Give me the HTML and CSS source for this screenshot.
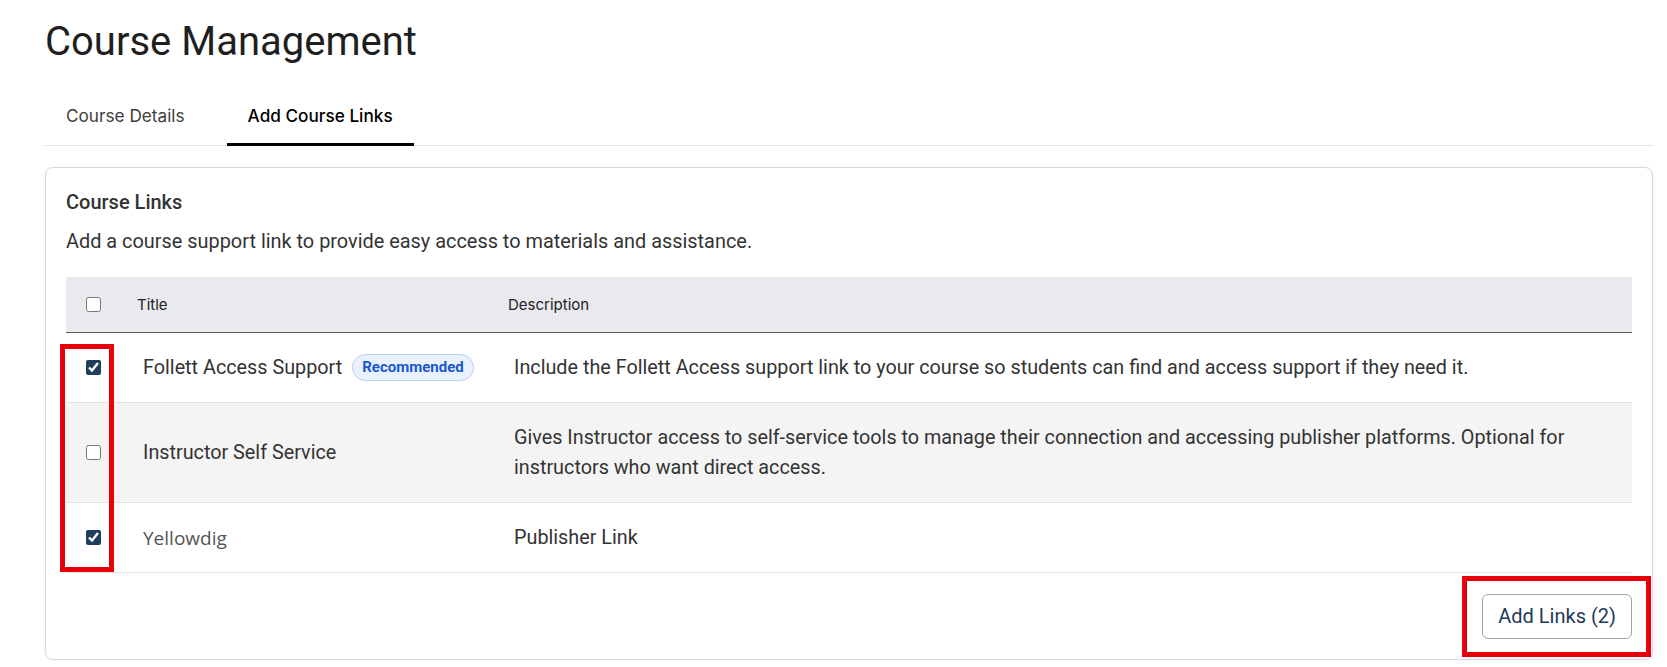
FILE: index.html
```html
<!DOCTYPE html>
<html lang="en">
<head>
    <meta charset="UTF-8">
    <meta name="viewport" content="width=device-width, initial-scale=1.0">
    <title>Course Management</title>
    <link rel="stylesheet" href="styles.css">
</head>
<body>
    <div class="page">
        <h1 class="page-title">Course Management</h1>

        <div class="tabs">
            <div class="tab">Course Details</div>
            <div class="tab active">Add Course Links</div>
        </div>

        <div class="card">
            <h2 class="card-title">Course Links</h2>
            <p class="card-text">Add a course support link to provide easy access to materials and assistance.</p>

            <table class="links-table">
                <thead>
                    <tr>
                        <th class="col-check"><input type="checkbox"></th>
                        <th class="col-title">Title</th>
                        <th>Description</th>
                    </tr>
                </thead>
                <tbody>
                    <tr>
                        <td class="col-check"><input type="checkbox" checked></td>
                        <td class="link-name">Follett Access Support<span class="badge">Recommended</span></td>
                        <td>Include the Follett Access support link to your course so students can find and access support if they need it.</td>
                    </tr>
                    <tr class="alt">
                        <td class="col-check"><input type="checkbox"></td>
                        <td class="link-name">Instructor Self Service</td>
                        <td>Gives Instructor access to self-service tools to manage their connection and accessing publisher platforms. Optional for instructors who want direct access.</td>
                    </tr>
                    <tr>
                        <td class="col-check"><input type="checkbox" checked></td>
                        <td class="link-name publisher-name">Yellowdig</td>
                        <td>Publisher Link</td>
                    </tr>
                </tbody>
            </table>

            <div class="card-footer">
                <button class="btn">Add Links (2)</button>
            </div>

            <div class="mark mark-checks"></div>
            <div class="mark mark-button"></div>
        </div>
    </div>
</body>
</html>
```

FILE: styles.css
```css
* {
    box-sizing: border-box;
}
body {
    margin: 0;
    background: #fff;
    font-family: Roboto, "Liberation Sans", sans-serif;
    color: #333;
}
.page {
    padding: 18px 14px 0 45px;
}
.page-title {
    margin: 0;
    font-size: 40px;
    line-height: 47px;
    font-weight: 400;
    color: #1f1f1f;
}

/* tabs */
.tabs {
    display: flex;
    gap: 21px;
    margin-top: 24px;
    border-bottom: 1px solid #e2e2e2;
}
.tab {
    font-family: Inter, sans-serif;
    font-size: 17.2px;
    line-height: 24px;
    color: #3d3d3d;
    padding: 15px 21px;
    border-bottom: 3px solid transparent;
    margin-bottom: -1px;
}
.tab.active {
    color: #000;
    font-weight: 500;
    border-bottom-color: #000;
}

/* card */
.card {
    position: relative;
    margin-top: 21px;
    border: 1px solid #d8d8d8;
    border-radius: 8px;
    padding: 20px;
    box-shadow: 0 1px 4px rgba(0, 0, 0, 0.08);
}
.card-title {
    margin: 0;
    font-size: 20px;
    line-height: 28px;
    font-weight: 500;
    color: #333;
}
.card-text {
    margin: 11px 0 20px;
    font-size: 19.9px;
    line-height: 30px;
    color: #333;
}

/* table */
.links-table {
    width: 100%;
    table-layout: fixed;
    border-collapse: separate;
    border-spacing: 0;
}
.links-table th {
    background: #e9eaee;
    font-family: Inter, sans-serif;
    font-size: 15px;
    font-weight: 400;
    line-height: 23px;
    color: #222;
    text-align: left;
    padding: 16px;
    border-bottom: 1px solid #5c5c5c;
}
.links-table td {
    font-size: 19.8px;
    line-height: 30px;
    color: #333;
    padding: 19.5px 16px 19.5px 22px;
    border-bottom: 1px solid #e2e2e2;
    vertical-align: middle;
}
.links-table tr.alt td {
    background: #f4f4f4;
}
.links-table .col-check {
    width: 55px;
    padding-left: 20px;
    padding-right: 0;
}
.links-table .col-title {
    width: 371px;
}
.links-table td.link-name {
    white-space: nowrap;
    padding-right: 0;
}
.links-table input {
    display: block;
    width: 15px;
    height: 15px;
    margin: 0;
    accent-color: #203e5c;
}
.links-table td.publisher-name {
    font-family: "Open Sans", sans-serif;
    font-size: 19px;
    color: #555;
}
.badge {
    display: inline-block;
    margin-left: 10px;
    padding: 0 9px;
    border: 1px solid #b9cff2;
    border-radius: 14px;
    background: #e9f1fd;
    color: #1b58d0;
    font-size: 15px;
    font-weight: 700;
    line-height: 25px;
    vertical-align: 2px;
}

/* footer */
.card-footer {
    display: flex;
    justify-content: flex-end;
    margin-top: 21px;
}
.btn {
    font-family: Roboto, sans-serif;
    font-size: 20px;
    line-height: 23px;
    padding: 10px 15px;
    border: 1px solid #a3a3a3;
    border-radius: 6px;
    background: #fff;
    color: #1f3a5a;
    cursor: pointer;
}

/* red annotation boxes */
.mark {
    position: absolute;
    border: 5px solid #e5000c;
    pointer-events: none;
}
.mark-checks {
    left: 14px;
    top: 176px;
    width: 54px;
    height: 228px;
}
.mark-button {
    right: 1px;
    bottom: 2px;
    width: 189px;
    height: 81px;
}
```
